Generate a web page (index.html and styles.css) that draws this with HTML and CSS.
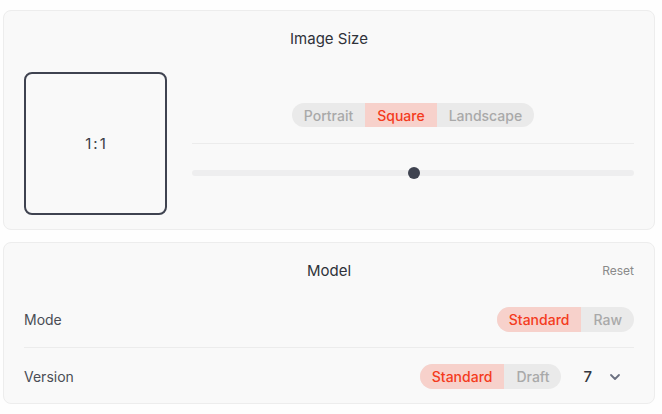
FILE: index.html
```html
<!DOCTYPE html>
<html>
<head>
<meta charset="utf-8">
<link rel="stylesheet" href="styles.css">
</head>
<body>
<section class="card size-card">
  <h2 class="card-title">Image Size</h2>
  <div class="size-row">
    <div class="preview"><span>1:1</span></div>
    <div class="size-controls">
      <div class="segmented">
        <span class="seg">Portrait</span>
        <span class="seg active">Square</span>
        <span class="seg">Landscape</span>
      </div>
      <div class="divider"></div>
      <div class="slider">
        <div class="track"></div>
        <div class="thumb" style="left: 50.2%"></div>
      </div>
    </div>
  </div>
</section>
<section class="card model-card">
  <div class="model-head">
    <h2 class="card-title">Model</h2>
    <span class="reset">Reset</span>
  </div>
  <div class="row">
    <span class="label">Mode</span>
    <div class="segmented">
      <span class="seg active">Standard</span>
      <span class="seg">Raw</span>
    </div>
  </div>
  <div class="row bordered">
    <span class="label">Version</span>
    <div class="version">
      <div class="segmented">
        <span class="seg active">Standard</span>
        <span class="seg">Draft</span>
      </div>
      <span class="ver-num">7</span>
      <svg class="chev" width="12" height="8" viewBox="0 0 12 8"><path d="M2 2 L6 6 L10 2" fill="none" stroke="#6b7080" stroke-width="1.8" stroke-linecap="round" stroke-linejoin="round"/></svg>
    </div>
  </div>
</section>
</body>
</html>
```

FILE: styles.css
```css
* { box-sizing: border-box; }
body {
  margin: 0;
  padding: 10px 7px 0 3px;
  background: #fefefe;
  font-family: Inter, "Noto Sans", sans-serif;
  color: #333640;
}
.card {
  background: #f9f9f9;
  border: 1px solid #ededed;
  border-radius: 8px;
  padding: 17px 20px 14px 20px;
}
.card-title {
  margin: 0;
  font-size: 15px;
  font-weight: 400;
  line-height: 22px;
  text-align: center;
  color: #2f323a;
}
.size-row {
  display: flex;
  gap: 25px;
  margin-top: 22px;
}
.preview {
  width: 143px;
  height: 143px;
  border: 2px solid #3f4350;
  border-radius: 8px;
  display: flex;
  align-items: center;
  justify-content: center;
  font-size: 15px;
  color: #3a3d47;
  letter-spacing: 2px;
}
.preview span { margin-right: -2px; }
.size-controls {
  flex: 1;
  display: flex;
  flex-direction: column;
  align-items: center;
  padding-top: 31px;
}
.segmented {
  display: inline-flex;
  background: #eaeaea;
  border-radius: 13px;
  overflow: hidden;
  height: 25px;
}
.seg {
  display: flex;
  align-items: center;
  padding: 0 12px;
  font-size: 14px;
  font-weight: 500;
  color: #a9a9a9;
}
.seg.active {
  background: #f7d1cb;
  color: #f43b1d;
}
.size-controls .segmented { height: 24px; }
.divider {
  align-self: stretch;
  height: 1px;
  background: #ececec;
  margin-top: 16px;
}
.slider {
  align-self: stretch;
  position: relative;
  height: 12px;
  margin-top: 23px;
}
.track {
  position: absolute;
  left: 0; right: 0; top: 3px;
  height: 6px;
  border-radius: 3px;
  background: #eeeeef;
}
.thumb {
  position: absolute;
  top: 0;
  width: 12px;
  height: 12px;
  margin-left: -6px;
  border-radius: 50%;
  background: #3f4350;
}
.model-card {
  margin-top: 12px;
  padding-bottom: 0;
}
.model-head {
  position: relative;
  margin-bottom: 10px;
}
.reset {
  position: absolute;
  right: 0;
  top: 3px;
  font-size: 12px;
  color: #8a8a8a;
}
.row {
  display: flex;
  align-items: center;
  justify-content: space-between;
  padding: 15px 0;
}
.row.bordered {
  border-top: 1px solid #ececec;
  padding: 16px 0 14px;
}
.label {
  font-size: 14px;
  color: #4a4d55;
}
.version {
  display: flex;
  align-items: center;
}
.ver-num {
  margin-left: 22px;
  font-size: 15px;
  font-weight: 500;
  color: #333640;
}
.chev {
  margin-left: 17px;
  margin-right: 13px;
}
```
